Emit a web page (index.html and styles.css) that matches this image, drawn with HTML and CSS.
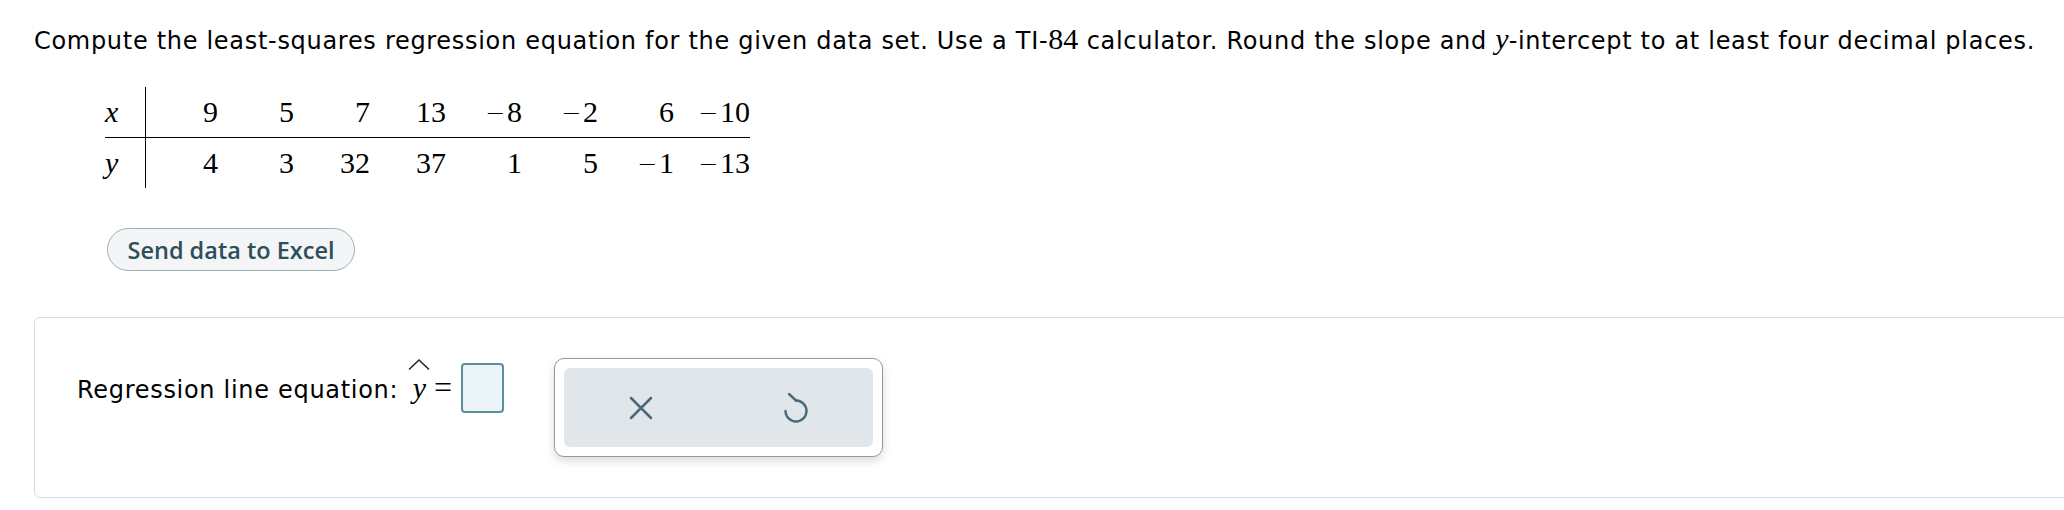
FILE: index.html
```html
<!DOCTYPE html>
<html>
<head>
<meta charset="utf-8">
<link rel="stylesheet" href="styles.css">
</head>
<body>
<div class="page">
  <p class="prose">Compute the least-squares regression equation for the given data set. Use a TI-<span class="num">84</span> calculator. Round the slope and <span class="var">y</span>-intercept to at least four decimal places.</p>

  <div class="tbl">
    <div class="lbl top"><span class="var">x</span></div>
    <div class="cell top">9</div>
    <div class="cell top">5</div>
    <div class="cell top">7</div>
    <div class="cell top">13</div>
    <div class="cell top"><span class="neg">−</span>8</div>
    <div class="cell top"><span class="neg">−</span>2</div>
    <div class="cell top">6</div>
    <div class="cell top"><span class="neg">−</span>10</div>
    <div class="lbl"><span class="var">y</span></div>
    <div class="cell">4</div>
    <div class="cell">3</div>
    <div class="cell">32</div>
    <div class="cell">37</div>
    <div class="cell">1</div>
    <div class="cell">5</div>
    <div class="cell"><span class="neg">−</span>1</div>
    <div class="cell"><span class="neg">−</span>13</div>
  </div>

  <button class="excel">Send data to Excel</button>

  <div class="answer">
    <div class="answer-row">
      <div class="eq">Regression line equation: <span class="yhat"><span class="hat"><svg width="24" height="14" viewBox="0 0 24 14"><polyline points="2,12.5 12,3 22,12.5" fill="none" stroke="#222" stroke-width="1.5"/></svg></span><span class="var">y</span></span><span class="equals">=</span><span class="input"></span></div>
      <div class="keypad">
        <div class="keys">
          <div class="key"><svg width="24" height="24" viewBox="0 0 24 24"><path d="M2 2 L22 22 M22 2 L2 22" stroke="#4a6a76" stroke-width="2.5" fill="none" stroke-linecap="round"/></svg></div>
          <div class="key"><svg width="26" height="32" viewBox="0 0 26 32"><path d="M13 8.5 A10.5 10.5 0 1 1 2.5 19" stroke="#4a6a76" stroke-width="2.4" fill="none" stroke-linecap="round"/><path d="M6 2 L13 8.5" stroke="#4a6a76" stroke-width="2.4" fill="none" stroke-linecap="round"/></svg></div>
        </div>
      </div>
    </div>
  </div>
</div>
</body>
</html>
```

FILE: styles.css
```css
html, body {
  margin: 0;
  padding: 0;
  background: #ffffff;
  overflow: hidden;
}

.page {
  padding: 24px 0 0 34px;
  font-family: "DejaVu Sans", Verdana, sans-serif;
  color: #000;
}

.prose {
  margin: 0;
  font-size: 24px;
  letter-spacing: 0.7px;
  line-height: 30px;
  white-space: nowrap;
}

.num {
  font-family: "Liberation Serif", "Times New Roman", serif;
  font-size: 30px;
  letter-spacing: 0;
}

.var {
  font-family: "Liberation Serif", "Times New Roman", serif;
  font-style: italic;
  font-size: 30px;
  letter-spacing: 0;
}

.tbl {
  display: grid;
  grid-template-columns: 41px 72px repeat(7, 76px);
  margin: 31px 0 0 71px;
  width: 646px;
  font-family: "Liberation Serif", "Times New Roman", serif;
  font-size: 30px;
}

.tbl .lbl,
.tbl .cell {
  height: 50px;
  line-height: 50px;
  white-space: nowrap;
}

.tbl .lbl {
  border-right: 1px solid #000;
  text-align: left;
}

.tbl .cell {
  text-align: right;
}

.tbl .top {
  border-bottom: 1px solid #000;
}

.neg {
  font-family: "DejaVu Sans", sans-serif;
  font-size: 24px;
  font-weight: 300;
  padding-right: 2px;
  vertical-align: 1px;
}

.excel {
  display: block;
  margin: 40px 0 0 73px;
  height: 43px;
  width: 248px;
  padding: 0;
  border: 1px solid #9eafb4;
  border-radius: 22px;
  background: #f3f5f6;
  color: #2d4e5a;
  font-family: "Open Sans", Lato, sans-serif;
  font-weight: 600;
  font-size: 23.5px;
  cursor: pointer;
}

.answer {
  margin-top: 46px;
  width: 100vw;
  border: 1px solid #d6dee1;
  border-radius: 6px;
  padding: 40px 0 40px 42px;
  box-sizing: border-box;
}

.answer-row {
  display: flex;
  align-items: flex-start;
  gap: 50px;
}

.eq {
  margin-top: 5px;
  font-size: 24px;
  letter-spacing: 0.7px;
  line-height: 30px;
  white-space: nowrap;
}

.yhat {
  position: relative;
  display: inline-block;
  margin-left: 6px;
}

.hat {
  position: absolute;
  left: -6px;
  top: -16px;
  line-height: 0;
}

.equals {
  font-family: "Liberation Serif", "Times New Roman", serif;
  font-size: 32px;
  letter-spacing: 0;
  margin: 0 9px 0 8px;
}

.input {
  display: inline-block;
  width: 43px;
  height: 50px;
  box-sizing: border-box;
  border: 2px solid #5a8f9d;
  border-radius: 4px;
  background: #eaf4f9;
  vertical-align: -15px;
}

.keypad {
  width: 329px;
  height: 99px;
  box-sizing: border-box;
  border: 1px solid #8a9ea5;
  border-radius: 10px;
  background: #fff;
  padding: 9px;
  box-shadow: 0 4px 10px rgba(0, 0, 0, 0.14);
}

.keys {
  display: flex;
  height: 100%;
  background: #e0e6e9;
  border-radius: 6px;
}

.key {
  flex: 1;
  display: flex;
  align-items: center;
  justify-content: center;
}

.key svg {
  display: block;
}
```
